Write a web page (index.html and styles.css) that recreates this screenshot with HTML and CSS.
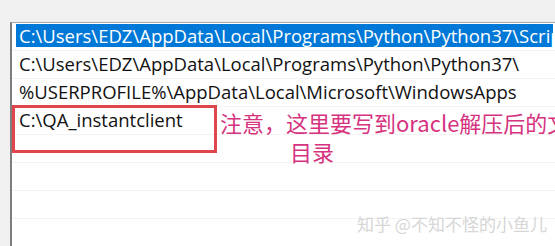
FILE: index.html
```html
<!DOCTYPE html>
<html>
<head>
<meta charset="utf-8">
<link rel="stylesheet" href="styles.css">
</head>
<body>
<div class="page">
  <div class="list">
    <div class="row sel"><span class="cell">C:\Users\EDZ\AppData\Local\Programs\Python\Python37\Scripts\</span></div>
    <div class="row"><span class="cell">C:\Users\EDZ\AppData\Local\Programs\Python\Python37\</span></div>
    <div class="row"><span class="cell">%USERPROFILE%\AppData\Local\Microsoft\WindowsApps</span></div>
    <div class="row"><span class="cell">C:\QA_instantclient</span></div>
    <div class="row"></div>
    <div class="row"></div>
    <div class="row"></div>
    <div class="row"></div>
  </div>
  <div class="redbox"></div>
  <div class="note"><div class="l1">注意，这里要写到oracle解压后的文</div><div class="l2">目录</div></div>
  <div class="mark">知乎 @不知不怪的小鱼儿</div>
</div>
</body>
</html>
```

FILE: styles.css
```css
html, body {
  margin: 0;
  padding: 0;
  background: #f0f0f0;
  overflow: hidden;
}
.page {
  position: relative;
  width: 555px;
  height: 246px;
  overflow: hidden;
  font-family: "Open Sans", "Noto Sans", "Noto Sans CJK SC", sans-serif;
}
.list {
  margin: 22px 0 0 10px;
  height: 240px;
  background: #fff;
  border-top: 1px solid #a9a9a9;
  border-left: 2px solid #7d7d7d;
}
.row {
  box-sizing: border-box;
  height: 28px;
  border-bottom: 1px solid #f3f3f3;
  padding: 1px 0 3px 4px;
  display: flex;
}
.cell {
  flex: 1;
  display: block;
  padding-left: 3px;
  font-size: 18.5px;
  line-height: 24px;
  color: #111;
  white-space: nowrap;
  overflow: hidden;
}
.row.sel .cell {
  background: #0078d7;
  color: #fff;
  margin-right: 2px;
}
.redbox {
  position: absolute;
  left: 12px;
  top: 105px;
  width: 199px;
  height: 42px;
  border: 3px solid #e0474c;
}
.note {
  position: absolute;
  left: 220px;
  top: 108px;
  font-family: "Noto Sans CJK SC", sans-serif;
  font-size: 22px;
  line-height: 29px;
  color: #d6337f;
  white-space: nowrap;
}
.note .l2 {
  padding-left: 70px;
}
.mark {
  position: absolute;
  left: 357px;
  top: 211px;
  font-family: "Noto Sans CJK SC", sans-serif;
  font-size: 17px;
  color: #d6d6d6;
  text-shadow: 0 0 1px #fff;
  white-space: nowrap;
}
```
